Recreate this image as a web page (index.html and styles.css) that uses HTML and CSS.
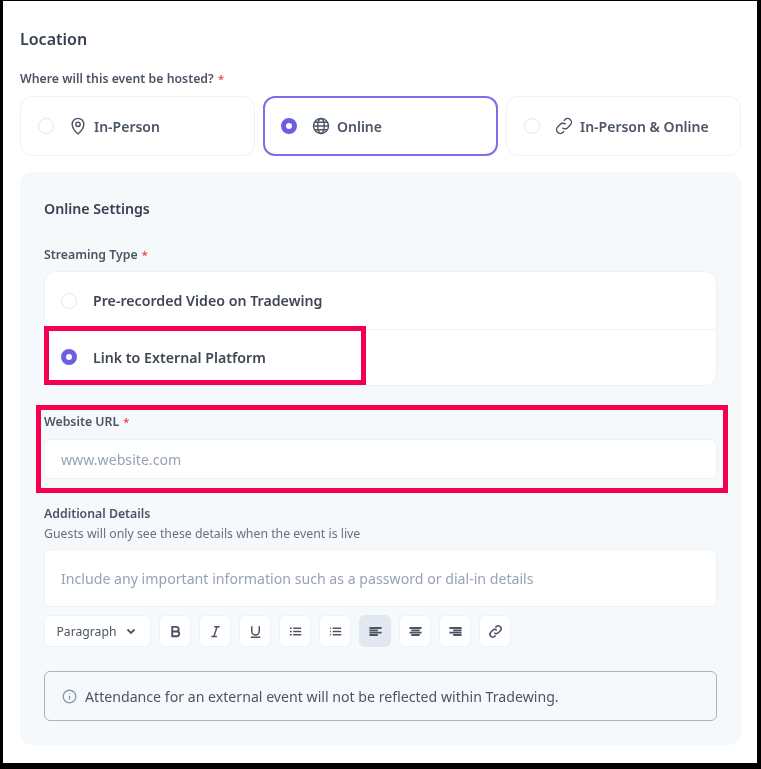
FILE: index.html
```html
<!DOCTYPE html>
<html lang="en">
<head>
  <meta charset="UTF-8" />
  <meta name="viewport" content="width=device-width, initial-scale=1.0" />
  <title>Location</title>
  <link rel="stylesheet" href="styles.css">
</head>
<body>
  <div class="frame">
    <h2 class="title">Location</h2>
    <p class="label host-label">Where will this event be hosted? <span class="req">*</span></p>

    <div class="cards">
      <div class="card">
        <span class="radio"></span>
        <svg class="card-icon" viewBox="0 0 24 24"><path d="M12 21.5s-7-6.2-7-11.7a7 7 0 0 1 14 0c0 5.500-7 11.700-7 11.700z"/><circle cx="12" cy="10" r="2.600"/></svg>
        <span>In-Person</span>
      </div>
      <div class="card selected">
        <span class="radio on"></span>
        <svg class="card-icon" viewBox="0 0 24 24"><circle cx="12" cy="12" r="9"/><ellipse cx="12" cy="12" rx="4" ry="9"/><path d="M3 12h18M4.500 7.500h15M4.500 16.500h15"/></svg>
        <span>Online</span>
      </div>
      <div class="card">
        <span class="radio"></span>
        <svg class="card-icon" viewBox="0 0 24 24"><path d="M10 14a4.500 4.500 0 0 0 6.400 0l3.200-3.200a4.500 4.500 0 0 0-6.400-6.400l-1.400 1.400"/><path d="M14 10a4.500 4.500 0 0 0-6.400 0l-3.200 3.200a4.500 4.500 0 0 0 6.400 6.400l1.400-1.400"/></svg>
        <span>In-Person &amp; Online</span>
      </div>
    </div>

    <div class="panel">
      <h3 class="panel-title">Online Settings</h3>
      <p class="label stream-label">Streaming Type <span class="req">*</span></p>

      <div class="stream-group">
        <div class="stream-row">
          <span class="radio"></span>
          <span>Pre-recorded Video on Tradewing</span>
        </div>
        <div class="stream-row">
          <span class="radio on"></span>
          <span>Link to External Platform</span>
        </div>
        <div class="mark mark-row"></div>
      </div>

      <div class="url-field">
        <div class="mark mark-url"></div>
        <p class="label url-label">Website URL <span class="req">*</span></p>
        <div class="input url-input">www.website.com</div>
      </div>

      <p class="label details-label">Additional Details</p>
      <p class="hint">Guests will only see these details when the event is live</p>
      <div class="input details-input">Include any important information such as a password or dial-in details</div>

      <div class="toolbar">
        <div class="tool select">
          <span>Paragraph</span>
          <svg class="chevron" viewBox="0 0 12 12"><path d="M2.500 4.500 6 8l3.500-3.500"/></svg>
        </div>
        <div class="tool">
          <svg viewBox="0 0 16 16"><path class="heavy" d="M4.500 3h4.300a2.500 2.500 0 0 1 0 5H4.500zM4.500 8h5a2.500 2.500 0 0 1 0 5h-5z"/></svg>
        </div>
        <div class="tool">
          <svg viewBox="0 0 16 16"><path class="thick" d="M6.500 2.800h6M3.500 13.200h6M9.700 2.800 6.300 13.200"/></svg>
        </div>
        <div class="tool">
          <svg viewBox="0 0 16 16"><path class="thick" d="M4 2.500v5.200a4 4 0 0 0 8 0V2.500M3 14h10"/></svg>
        </div>
        <div class="tool">
          <svg viewBox="0 0 16 16"><path class="thick" d="M5.500 4.500H14M5.500 8H14M5.500 11.500H14M2 4.500h2M2 8h2M2 11.500h2"/></svg>
        </div>
        <div class="tool">
          <svg viewBox="0 0 16 16"><path class="thick" d="M5 4.500h9M5 8h9M5 11.500h9M2 4.500h1M2 8h1M2 11.500h1"/></svg>
        </div>
        <div class="tool active">
          <svg viewBox="0 0 16 16"><path class="heavy" d="M1.500 4.300h13M1.500 6.800h9M1.500 9.200h13M1.500 11.700h9"/></svg>
        </div>
        <div class="tool">
          <svg viewBox="0 0 16 16"><path class="heavy" d="M1.500 4.300h13M3.500 6.800h9M1.500 9.200h13M3.500 11.700h9"/></svg>
        </div>
        <div class="tool">
          <svg viewBox="0 0 16 16"><path class="heavy" d="M1.500 4.300h13M5.500 6.800h9M1.500 9.200h13M5.500 11.700h9"/></svg>
        </div>
        <div class="tool">
          <svg viewBox="0 0 24 24"><path class="link" d="M10 14a4.500 4.500 0 0 0 6.400 0l3.200-3.200a4.500 4.500 0 0 0-6.400-6.400l-1.400 1.400"/><path class="link" d="M14 10a4.500 4.500 0 0 0-6.400 0l-3.200 3.200a4.500 4.500 0 0 0 6.400 6.400l1.400-1.400"/></svg>
        </div>
      </div>

      <div class="notice">
        <svg class="notice-icon" viewBox="0 0 16 16"><circle cx="8" cy="8" r="6.700"/><path d="M8 7.300v4M8 4.600v.8"/></svg>
        <span>Attendance for an external event will not be reflected within Tradewing.</span>
      </div>
    </div>
  </div>
</body>
</html>
```

FILE: styles.css
```css
* {
  box-sizing: border-box;
}

html,
body {
  height: 769px;
  overflow: hidden;
}

body {
  margin: 0;
  background: #000;
  font-family: "Noto Sans", "Open Sans", sans-serif;
  color: #3f4654;
}

p,
h2,
h3 {
  margin: 0;
}

.frame {
  width: 754px;
  height: 762px;
  margin: 1px 0 0 3px;
  padding: 24px 16px 0 17px;
  background: #fff;
  filter: blur(0.5px);
}

.title {
  font-size: 16px;
  line-height: 28px;
  font-weight: 600;
  color: #374151;
}

.label {
  font-size: 12.300px;
  line-height: 16px;
  font-weight: 600;
  color: #4b5563;
}

.req {
  color: #ef4444;
  margin-left: 1px;
  font-size: 11px;
}

.host-label {
  margin-top: 18px;
}

.cards {
  display: grid;
  grid-template-columns: 235px 235px 235px;
  gap: 8px;
  margin-top: 9px;
}

.card {
  height: 60px;
  display: flex;
  align-items: center;
  padding-left: 17px;
  border: 1.500px solid #eef1f6;
  border-radius: 12px;
  font-size: 14px;
  font-weight: 600;
  color: #4b5563;
}

.card.selected {
  padding-left: 16px;
  border: 2px solid #7c6fe8;
}

.card-icon {
  width: 20px;
  height: 20px;
  margin: 0 6px 0 14px;
  fill: none;
  stroke: #4b5563;
  stroke-width: 1.700;
}

.radio {
  flex: none;
  width: 16px;
  height: 16px;
  border: 1.500px solid #e3e7ef;
  border-radius: 50%;
  background: #fff;
}

.radio.on {
  border: 5px solid #6a5fe0;
}

.panel {
  width: 721px;
  height: 573px;
  margin-top: 16px;
  padding: 25px 24px 0;
  background: #f6f9fc;
  border-radius: 12px;
}

.panel-title {
  font-size: 14.200px;
  line-height: 24px;
  font-weight: 600;
  color: #374151;
}

.stream-label {
  margin-top: 26px;
}

.stream-group {
  position: relative;
  margin-top: 8px;
  background: #fff;
  border: 1px solid #edf0f5;
  border-radius: 12px;
}

.stream-row {
  height: 57px;
  display: flex;
  align-items: center;
  gap: 16px;
  padding-left: 16px;
  font-size: 14.200px;
  font-weight: 600;
  color: #3f4654;
}

.stream-row + .stream-row {
  height: 56px;
  padding-bottom: 1px;
  border-top: 1px solid #edf0f5;
}

.mark {
  position: absolute;
  border: 5px solid #f4004f;
}

.mark-row {
  left: -1px;
  top: 54px;
  width: 322px;
  height: 59px;
}

.url-field {
  position: relative;
  padding-top: 28px;
}

.mark-url {
  left: -8px;
  top: 19px;
  width: 692px;
  height: 88px;
}

.url-input {
  margin-top: 9px;
  height: 40px;
}

.input {
  display: flex;
  align-items: center;
  padding-left: 16px;
  background: #fff;
  border: 1px solid #edf0f5;
  border-radius: 6px;
  font-size: 14.150px;
  color: #98a2b3;
}

.details-label {
  margin-top: 27px;
}

.hint {
  margin-top: 4px;
  font-size: 12.300px;
  line-height: 16px;
  color: #667085;
}

.details-input {
  margin-top: 7px;
  height: 58px;
}

.toolbar {
  display: flex;
  gap: 8px;
  margin-top: 8px;
}

.tool {
  width: 32px;
  height: 32px;
  display: flex;
  align-items: center;
  justify-content: center;
  background: #fff;
  border: 1px solid #eef1f6;
  border-radius: 6px;
}

.tool svg {
  width: 15px;
  height: 15px;
  fill: none;
  stroke: #4b5563;
}

.tool .thick {
  stroke-width: 1.600;
}

.tool .heavy {
  stroke-width: 2;
}

.tool .link {
  stroke-width: 2.600;
}

.tool.active {
  background: #e2e8f0;
  border-color: #e2e8f0;
}

.select {
  width: 107px;
  gap: 8px;
  padding-right: 2px;
  font-size: 12.200px;
  color: #4b5563;
}

.tool .chevron {
  width: 12px;
  height: 12px;
  stroke-width: 1.800;
}

.notice {
  height: 50px;
  margin-top: 24px;
  display: flex;
  align-items: center;
  gap: 8px;
  padding-left: 17px;
  border: 1.500px solid #a9b4c6;
  border-radius: 6px;
  font-size: 14.150px;
  color: #4b5563;
}

.notice-icon {
  width: 15px;
  height: 15px;
  fill: none;
  stroke: #8b97ab;
  stroke-width: 1.400;
}
```
